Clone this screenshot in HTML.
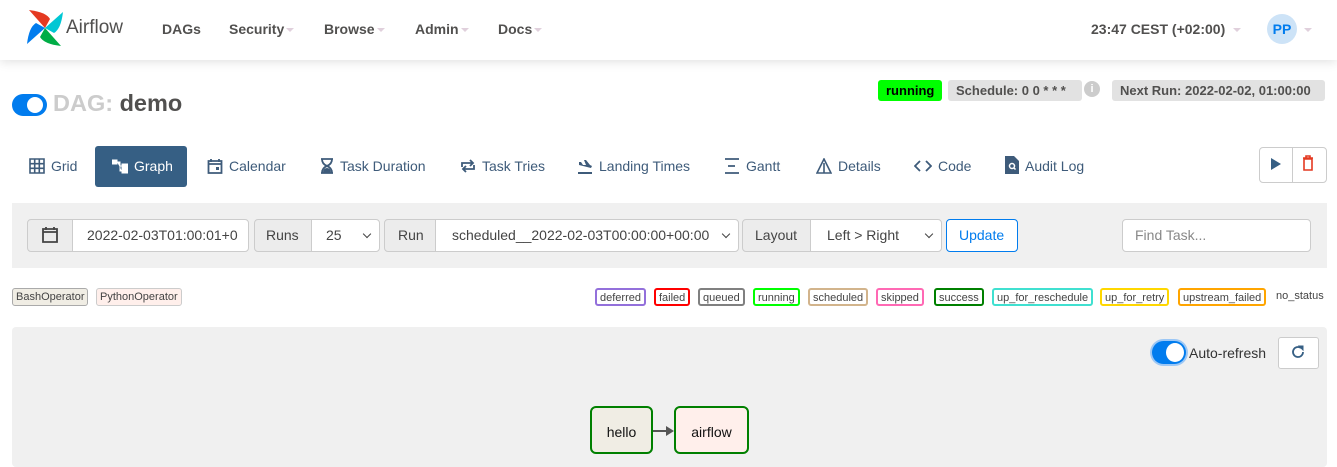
<!DOCTYPE html>
<html><head><style>
*{box-sizing:border-box;margin:0;padding:0}
body{width:1337px;height:463px;overflow:hidden;background:#fff;font-family:"Liberation Sans",Arial,sans-serif;color:#51504f;position:relative}
.abs{position:absolute}
.nav{left:0;top:0;width:1337px;height:60px;background:#fff;box-shadow:0 2px 10px rgba(0,0,0,.12)}
.ni{top:21px;font-size:14px;font-weight:bold;color:#51504f}
.caret{display:inline-block;width:0;height:0;border-left:4px solid transparent;border-right:4px solid transparent;border-top:4px solid #e0d0dc;margin-left:2px;vertical-align:middle}
.badge{top:80px;height:21px;font-size:13px;font-weight:bold;line-height:21px;padding:0 8px;border-radius:3px;background:#e2e2e2;color:#51504f}
.tab{top:158px;font-size:14px;color:#3e5b7a}
.tab svg{vertical-align:-3px;margin-right:6px}
.box{border:1px solid #ccc;height:33px;top:219px;font-size:14px;line-height:31px;padding-left:14px;color:#444;background:#fff}
.grey{background:#ececec}
.sel:after{content:"";position:absolute;right:9px;top:11px;width:5px;height:5px;border-right:1.5px solid #444;border-bottom:1.5px solid #444;transform:rotate(45deg)}
.leg{top:288px;height:18px;font-size:11px;line-height:16px;padding:0 3px;border:2px solid;border-radius:3px;color:#444;background:#fff}
</style></head><body>
<div class="abs nav"></div>
<svg class="abs" style="left:26px;top:9px" width="38" height="38" viewBox="0 0 38 38">
<path d="M19 19 L3 1 Q20 3 24 10 Z" fill="#e43921"/>
<path d="M19 19 L37 3 Q35 20 28 24 Z" fill="#00c7d4"/>
<path d="M19 19 L35 37 Q18 35 14 28 Z" fill="#00ad46"/>
<path d="M19 19 L1 35 Q3 18 10 14 Z" fill="#017cee"/>
</svg>
<div class="abs" style="left:66px;top:17px;font-size:19px;color:#51504f">Airflow</div>
<div class="abs ni" style="left:162px">DAGs</div>
<div class="abs ni" style="left:229px">Security<span class="caret"></span></div>
<div class="abs ni" style="left:324px">Browse<span class="caret"></span></div>
<div class="abs ni" style="left:415px">Admin<span class="caret"></span></div>
<div class="abs ni" style="left:498px">Docs<span class="caret"></span></div>
<div class="abs ni" style="left:1091px">23:47 CEST (+02:00)<span class="caret" style="margin-left:8px"></span></div>
<div class="abs" style="left:1267px;top:14px;width:30px;height:30px;border-radius:50%;background:#cde3f7;color:#017cee;font-size:14px;font-weight:bold;text-align:center;line-height:30px">PP</div>
<span class="abs caret" style="left:1302px;top:28px"></span>

<div class="abs" style="left:12px;top:94px;width:35px;height:22px;border-radius:11px;background:#017cee"></div>
<div class="abs" style="left:27px;top:97px;width:16px;height:16px;border-radius:50%;background:#fff"></div>
<div class="abs" style="left:53px;top:90px;font-size:23.5px;font-weight:bold;color:#ccc">DAG: <span style="color:#51504f">demo</span></div>

<div class="abs badge" style="left:878px;background:#00ff00;color:#000">running</div>
<div class="abs badge" style="left:948px;width:134px">Schedule: 0 0 * * *</div>
<div class="abs" style="left:1084px;top:81px;width:16px;height:16px;border-radius:50%;background:#ccc;color:#fff;font-size:11px;font-weight:bold;text-align:center;line-height:16px">i</div>
<div class="abs badge" style="left:1112px;width:213px">Next Run: 2022-02-02, 01:00:00</div>

<div class="abs" style="left:95px;top:146px;width:92px;height:41px;background:#365f84;border-radius:3px"></div>
<div class="abs tab" style="left:29px"><svg width="16" height="16" viewBox="0 0 16 16"><path d="M1 1h14v14H1zM1 5.7h14M1 10.3h14M5.7 1v14M10.3 1v14" fill="none" stroke="#3e5b7a" stroke-width="1.6"/></svg>Grid</div>
<div class="abs tab" style="left:112px;color:#fff"><svg width="16" height="16" viewBox="0 0 16 16"><path d="M0 2h5v4H0zM10 6h6v4h-6zM10 11h6v4h-6zM5 4h3v9h2M8 8h2" fill="#fff" stroke="#fff" stroke-width="1"/></svg>Graph</div>
<div class="abs tab" style="left:207px"><svg width="16" height="16" viewBox="0 0 16 16"><path d="M1.5 3h13v12h-13zM1.5 3h13v3h-13z M4 1v3M12 1v3" fill="none" stroke="#3e5b7a" stroke-width="1.8"/><rect x="9" y="9" width="3" height="3" fill="#3e5b7a"/></svg>Calendar</div>
<div class="abs tab" style="left:320px"><svg width="14" height="16" viewBox="0 0 14 16"><path d="M1 1h12M1 15h12M2 1q0 5 5 7q5 2 5 7M12 1q0 5-5 7q-5 2-5 7" fill="none" stroke="#3e5b7a" stroke-width="1.8"/><path d="M3 15q0-5 4-5q4 0 4 5z" fill="#3e5b7a"/></svg>Task Duration</div>
<div class="abs tab" style="left:460px"><svg width="16" height="16" viewBox="0 0 16 16"><path d="M2 9V5h11M10 2l3 3-3 3M14 7v4H3M6 8l-3 3 3 3" fill="none" stroke="#3e5b7a" stroke-width="1.8"/></svg>Task Tries</div>
<div class="abs tab" style="left:577px"><svg width="16" height="16" viewBox="0 0 16 16"><path d="M1 15h14" stroke="#3e5b7a" stroke-width="2"/><path d="M2 4l2 0 2 3 3 0-2-5 2 0 4 5 2 1-1 2-12-3z" fill="#3e5b7a"/></svg>Landing Times</div>
<div class="abs tab" style="left:724px"><svg width="16" height="16" viewBox="0 0 16 16"><path d="M1 1h14M4 8h7M1 15h14" fill="none" stroke="#3e5b7a" stroke-width="1.8"/></svg>Gantt</div>
<div class="abs tab" style="left:816px"><svg width="16" height="16" viewBox="0 0 16 16"><path d="M8 1L1 15h14zM8 5v10" fill="none" stroke="#3e5b7a" stroke-width="1.6"/></svg>Details</div>
<div class="abs tab" style="left:914px"><svg width="18" height="16" viewBox="0 0 18 16"><path d="M6 3L1 8l5 5M12 3l5 5-5 5" fill="none" stroke="#3e5b7a" stroke-width="1.8"/></svg>Code</div>
<div class="abs tab" style="left:1005px;top:156px"><svg width="14" height="18" viewBox="0 0 14 18"><path d="M0 0h9l5 5v13H0z" fill="#3e5b7a"/><circle cx="7" cy="10" r="2.5" fill="none" stroke="#fff" stroke-width="1.5"/><path d="M8.5 11.5l2 2" stroke="#fff" stroke-width="1.5"/></svg>Audit Log</div>

<div class="abs" style="left:1259px;top:147px;width:68px;height:36px;border:1px solid #ccc;border-radius:4px"></div>
<div class="abs" style="left:1292px;top:147px;width:1px;height:36px;background:#ccc"></div>
<svg class="abs" style="left:1270px;top:157px" width="12" height="14"><path d="M1 1l10 6-10 6z" fill="#365f84"/></svg>
<svg class="abs" style="left:1302px;top:155px" width="12" height="16"><path d="M1 3h10M4 3V1h4v2M2 4h8v11H2z" fill="none" stroke="#e43921" stroke-width="1.6"/></svg>

<div class="abs" style="left:12px;top:203px;width:1315px;height:65px;background:#f0f0f0"></div>
<div class="abs box grey" style="left:27px;width:46px;border-radius:4px 0 0 4px"><svg style="vertical-align:-3px" width="16" height="17" viewBox="0 0 16 17"><path d="M1 3h14v13H1zM1 3h14v3H1zM4 1v3M12 1v3" fill="none" stroke="#444" stroke-width="1.8"/></svg></div>
<div class="abs box" style="left:72px;width:177px;border-radius:0 4px 4px 0">2022-02-03T01:00:01+0</div>
<div class="abs box grey" style="left:254px;width:58px;border-radius:4px 0 0 4px;padding-left:11px">Runs</div>
<div class="abs box sel" style="left:311px;width:69px;border-radius:0 4px 4px 0">25</div>
<div class="abs box grey" style="left:384px;width:52px;border-radius:4px 0 0 4px;padding-left:13px">Run</div>
<div class="abs box sel" style="left:435px;width:304px;border-radius:0 4px 4px 0;padding-left:16px">scheduled__2022-02-03T00:00:00+00:00</div>
<div class="abs box grey" style="left:742px;width:69px;border-radius:4px 0 0 4px;padding-left:12px">Layout</div>
<div class="abs box sel" style="left:810px;width:132px;border-radius:0 4px 4px 0;padding-left:16px">Left &gt; Right</div>
<div class="abs box" style="left:946px;width:72px;border:1px solid #017cee;border-radius:4px;color:#017cee;padding-left:12px">Update</div>
<div class="abs box" style="left:1122px;width:189px;border-radius:4px;color:#888;padding-left:12px">Find Task...</div>

<div class="abs leg" style="left:12px;border:1px solid #aaa;background:#f0ede4">BashOperator</div>
<div class="abs leg" style="left:96px;border:1px solid #ccc;background:#ffefeb">PythonOperator</div>
<div class="abs leg" style="left:595px;border-color:#9370db">deferred</div>
<div class="abs leg" style="left:654px;border-color:red">failed</div>
<div class="abs leg" style="left:698px;border-color:gray">queued</div>
<div class="abs leg" style="left:753px;border-color:lime">running</div>
<div class="abs leg" style="left:808px;border-color:tan">scheduled</div>
<div class="abs leg" style="left:876px;border-color:hotpink">skipped</div>
<div class="abs leg" style="left:934px;border-color:green">success</div>
<div class="abs leg" style="left:992px;border-color:turquoise">up_for_reschedule</div>
<div class="abs leg" style="left:1100px;border-color:gold">up_for_retry</div>
<div class="abs leg" style="left:1178px;border-color:orange">upstream_failed</div>
<div class="abs" style="left:1276px;top:290px;font-size:11px;color:#444">no_status</div>

<div class="abs" style="left:12px;top:327px;width:1315px;height:140px;background:#f0f0f0;border-radius:4px"></div>
<div class="abs" style="left:1150px;top:339px;width:38px;height:27px;border-radius:14px;background:#9cc7f5"></div>
<div class="abs" style="left:1152px;top:341px;width:34px;height:23px;border-radius:12px;background:#017cee"></div>
<div class="abs" style="left:1166px;top:343px;width:18px;height:19px;border-radius:50%;background:#fff"></div>
<div class="abs" style="left:1189px;top:345px;font-size:14px;color:#333">Auto-refresh</div>
<div class="abs" style="left:1278px;top:337px;width:41px;height:32px;border:1px solid #ccc;border-radius:3px;background:#fff"></div>
<svg class="abs" style="left:1291px;top:345px" width="14" height="14" viewBox="0 0 14 14"><path d="M12 7A5 5 0 1 1 10 3" fill="none" stroke="#365f84" stroke-width="1.8"/><path d="M8 1h4v4z" fill="#365f84" stroke="#365f84"/></svg>
<div class="abs" style="left:590px;top:406px;width:63px;height:48px;border:2px solid green;border-radius:6px;background:#f0ede4;font-size:14px;color:#111;text-align:center;line-height:48px">hello</div>
<div class="abs" style="left:653px;top:430px;width:16px;height:1.5px;background:#555"></div>
<svg class="abs" style="left:666px;top:426px" width="8" height="10"><path d="M0 0l8 5-8 5z" fill="#555"/></svg>
<div class="abs" style="left:674px;top:406px;width:75px;height:48px;border:2px solid green;border-radius:6px;background:#ffefeb;font-size:14px;color:#111;text-align:center;line-height:48px">airflow</div>
</body></html>
